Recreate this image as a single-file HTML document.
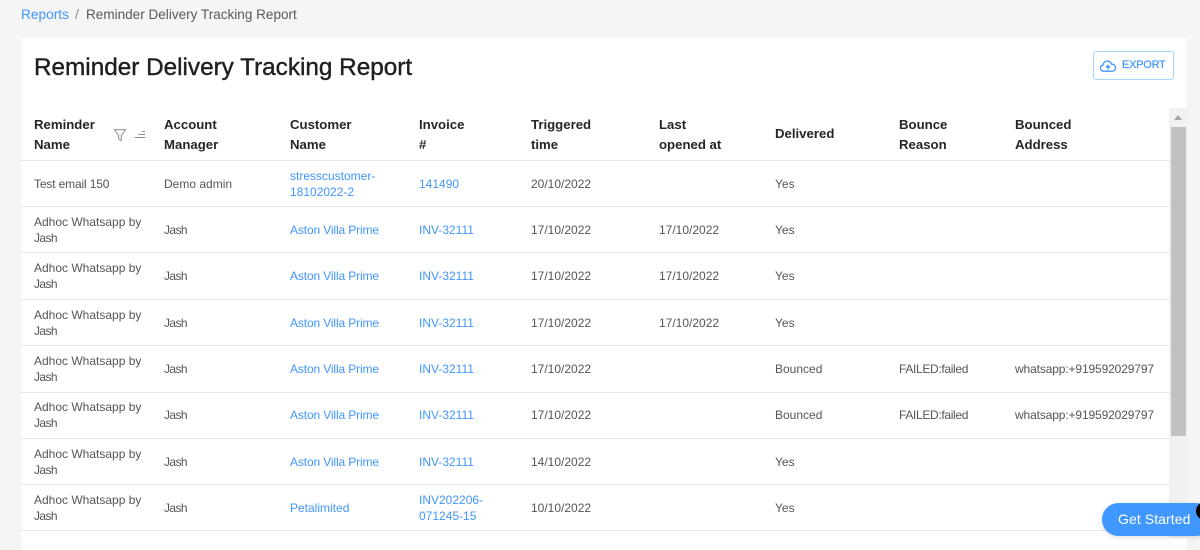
<!DOCTYPE html>
<html>
<head>
<meta charset="utf-8">
<style>
html,body{margin:0;padding:0;width:1200px;height:550px;overflow:hidden;background:#f5f5f5;font-family:"Liberation Sans",sans-serif;}
#p{position:relative;width:1200px;height:550px;overflow:hidden;}
.a{position:absolute;white-space:nowrap;}
.card{position:absolute;left:21px;top:37px;width:1166px;height:513px;background:#fff;border-radius:4px 4px 0 0;box-shadow:0 0 1px rgba(0,0,0,.08);}
.h{position:absolute;white-space:nowrap;font-size:13.2px;font-weight:bold;color:#262626;line-height:19.5px;top:115px;}
.h1{top:124px;}
.l{position:absolute;left:21px;width:1148px;height:1px;background:#e8e8e8;}
.c{position:absolute;white-space:nowrap;font-size:12px;line-height:16px;color:#555;transform:translateY(-50%);}
.b{color:#4096ff;}
.j{letter-spacing:-.6px;}
.v{letter-spacing:-.13px;}
.f{letter-spacing:-.33px;}
</style>
</head>
<body>
<div id="p">
<div class="a" style="left:21px;top:6px;font-size:13.7px;line-height:18px;color:#4096ff;">Reports</div>
<div class="a" style="left:75px;top:5px;font-size:14px;line-height:18px;color:#8c8c8c;">/</div>
<div class="a" style="left:86px;top:6px;font-size:13.55px;line-height:18px;color:#595959;">Reminder Delivery Tracking Report</div>
<div class="card"></div>
<div class="a" style="left:34px;top:52px;font-size:24.3px;line-height:32px;color:#1f1f1f;-webkit-text-stroke:.4px #1f1f1f;">Reminder Delivery Tracking Report</div>

<div class="a" style="left:1093px;top:51px;width:79px;height:27px;border:1px solid #a9d3ff;border-radius:3px;"></div>
<svg class="a" style="left:1100px;top:58px;" width="16" height="15" viewBox="0 0 16 15" fill="none" stroke="#4096ff" stroke-width="1.3"><path d="M4 13.2H3.6A3 3 0 0 1 3 7.2a4.4 4.4 0 0 1 8.6-1A3.4 3.4 0 0 1 12.4 13.2H4Z"/><path d="M8 11.5V7.5M6 9.5 8 7.5l2 2" stroke-width="1.4"/></svg>
<div class="a" style="left:1122px;top:57px;font-size:11px;line-height:16px;color:#4096ff;letter-spacing:-.25px;-webkit-text-stroke:.2px #4096ff;">EXPORT</div>

<div class="h" style="left:34px;">Reminder<br>Name</div>
<svg class="a" style="left:113px;top:128px;" width="14" height="14" viewBox="0 0 14 14" fill="none" stroke="#8c8c8c" stroke-width="1"><path d="M1.5 1.8H12.5L8.3 7.2V12.5L5.7 11V7.2Z"/></svg>
<svg class="a" style="left:133px;top:130px;" width="13" height="10" viewBox="0 0 13 10" fill="none" stroke="#8c8c8c" stroke-width="1"><path d="M9 1.5H12M5.5 4.5H12M2 7.5H12"/></svg>
<div class="h" style="left:164px;">Account<br>Manager</div>
<div class="h" style="left:290px;">Customer<br>Name</div>
<div class="h" style="left:419px;">Invoice<br>#</div>
<div class="h" style="left:531px;">Triggered<br>time</div>
<div class="h" style="left:659px;">Last<br>opened at</div>
<div class="h h1" style="left:775px;">Delivered</div>
<div class="h" style="left:899px;">Bounce<br>Reason</div>
<div class="h" style="left:1015px;">Bounced<br>Address</div>

<div class="l" style="top:160px;"></div>
<div class="l" style="top:206px;"></div>
<div class="l" style="top:252px;"></div>
<div class="l" style="top:299px;"></div>
<div class="l" style="top:345px;"></div>
<div class="l" style="top:392px;"></div>
<div class="l" style="top:438px;"></div>
<div class="l" style="top:484px;"></div>
<div class="l" style="top:530px;"></div>

<div class="c" style="left:34px;top:184px;letter-spacing:-.15px;">Test email 150</div>
<div class="c" style="left:164px;top:184px;">Demo admin</div>
<div class="c b" style="left:290px;top:184px;">stresscustomer-<br>18102022-2</div>
<div class="c b" style="left:419px;top:184px;">141490</div>
<div class="c" style="left:531px;top:184px;">20/10/2022</div>
<div class="c" style="left:775px;top:184px;">Yes</div>

<div class="c" style="left:34px;top:230px;">Adhoc Whatsapp by<br><span class="j">Jash</span></div>
<div class="c j" style="left:164px;top:230px;">Jash</div>
<div class="c b v" style="left:290px;top:230px;">Aston Villa Prime</div>
<div class="c b" style="left:419px;top:230px;">INV-32111</div>
<div class="c" style="left:531px;top:230px;">17/10/2022</div>
<div class="c" style="left:659px;top:230px;">17/10/2022</div>
<div class="c" style="left:775px;top:230px;">Yes</div>

<div class="c" style="left:34px;top:276px;">Adhoc Whatsapp by<br><span class="j">Jash</span></div>
<div class="c j" style="left:164px;top:276px;">Jash</div>
<div class="c b v" style="left:290px;top:276px;">Aston Villa Prime</div>
<div class="c b" style="left:419px;top:276px;">INV-32111</div>
<div class="c" style="left:531px;top:276px;">17/10/2022</div>
<div class="c" style="left:659px;top:276px;">17/10/2022</div>
<div class="c" style="left:775px;top:276px;">Yes</div>

<div class="c" style="left:34px;top:323px;">Adhoc Whatsapp by<br><span class="j">Jash</span></div>
<div class="c j" style="left:164px;top:323px;">Jash</div>
<div class="c b v" style="left:290px;top:323px;">Aston Villa Prime</div>
<div class="c b" style="left:419px;top:323px;">INV-32111</div>
<div class="c" style="left:531px;top:323px;">17/10/2022</div>
<div class="c" style="left:659px;top:323px;">17/10/2022</div>
<div class="c" style="left:775px;top:323px;">Yes</div>

<div class="c" style="left:34px;top:369px;">Adhoc Whatsapp by<br><span class="j">Jash</span></div>
<div class="c j" style="left:164px;top:369px;">Jash</div>
<div class="c b v" style="left:290px;top:369px;">Aston Villa Prime</div>
<div class="c b" style="left:419px;top:369px;">INV-32111</div>
<div class="c" style="left:531px;top:369px;">17/10/2022</div>
<div class="c" style="left:775px;top:369px;">Bounced</div>
<div class="c f" style="left:899px;top:369px;">FAILED:failed</div>
<div class="c v" style="left:1015px;top:369px;">whatsapp:+919592029797</div>

<div class="c" style="left:34px;top:415px;">Adhoc Whatsapp by<br><span class="j">Jash</span></div>
<div class="c j" style="left:164px;top:415px;">Jash</div>
<div class="c b v" style="left:290px;top:415px;">Aston Villa Prime</div>
<div class="c b" style="left:419px;top:415px;">INV-32111</div>
<div class="c" style="left:531px;top:415px;">17/10/2022</div>
<div class="c" style="left:775px;top:415px;">Bounced</div>
<div class="c f" style="left:899px;top:415px;">FAILED:failed</div>
<div class="c v" style="left:1015px;top:415px;">whatsapp:+919592029797</div>

<div class="c" style="left:34px;top:462px;">Adhoc Whatsapp by<br><span class="j">Jash</span></div>
<div class="c j" style="left:164px;top:462px;">Jash</div>
<div class="c b v" style="left:290px;top:462px;">Aston Villa Prime</div>
<div class="c b" style="left:419px;top:462px;">INV-32111</div>
<div class="c" style="left:531px;top:462px;">14/10/2022</div>
<div class="c" style="left:775px;top:462px;">Yes</div>

<div class="c" style="left:34px;top:508px;">Adhoc Whatsapp by<br><span class="j">Jash</span></div>
<div class="c j" style="left:164px;top:508px;">Jash</div>
<div class="c b" style="left:290px;top:508px;">Petalimited</div>
<div class="c b" style="left:419px;top:508px;">INV202206-<br>071245-15</div>
<div class="c" style="left:531px;top:508px;">10/10/2022</div>
<div class="c" style="left:775px;top:508px;">Yes</div>

<div class="a" style="left:1169px;top:108px;width:18px;height:430px;background:#f1f1f1;"></div>
<div class="a" style="left:1171px;top:127px;width:15px;height:309px;background:#c1c1c1;"></div>
<div class="a" style="left:1174px;top:115px;width:0;height:0;border-left:4px solid transparent;border-right:4px solid transparent;border-bottom:5px solid #a3a3a3;"></div>

<div class="a" style="left:1102px;top:503px;width:110px;height:33px;border-radius:17px;background:#3f97ff;box-shadow:0 1px 5px rgba(0,0,0,.15);"></div>
<div class="a" style="left:1118px;top:510px;font-size:14px;line-height:18px;color:#fff;letter-spacing:.08px;">Get Started</div>
<div class="a" style="left:1196px;top:502px;width:18px;height:18px;border-radius:50%;background:#000;"></div>
</div>
</body>
</html>
